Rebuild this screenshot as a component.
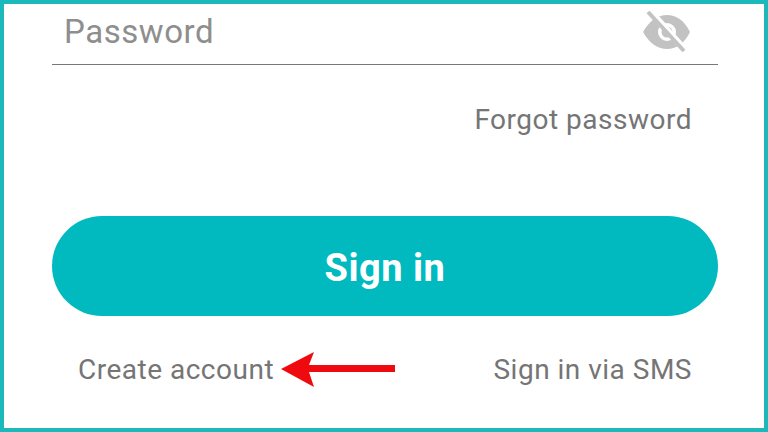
<script>
  let password = '';
</script>

<div class="screen">
  <div class="field">
    <span class="placeholder">Password</span>
    <svg class="eye" width="48" height="42" viewBox="0 0 48 42">
      <path d="M0 21 C7 9 15 4 24 4 C33 4 41 9 47 21 C41 33 33 38 24 38 C15 38 7 33 0 21 Z M24 12 A9 9 0 1 0 24 30 A9 9 0 1 0 24 12 Z" fill="#c2c2c2" fill-rule="evenodd" />
      <circle cx="24" cy="21" r="5.5" fill="#c2c2c2" />
      <path d="M7 0 L43 40" stroke="#fff" stroke-width="6.5" />
      <path d="M5 1 L41 40" stroke="#c2c2c2" stroke-width="4" />
    </svg>
  </div>

  <div class="forgot">Forgot password</div>

  <button class="signin">Sign in</button>

  <div class="links">
    <div class="create">
      <span>Create account</span>
      <svg class="arrow" width="116" height="40" viewBox="0 0 116 40">
        <path d="M1 20 L34 3 L29 16 L115 16 L115 23 L29 23 L34 38 Z" fill="#ee0a0f" />
      </svg>
    </div>
    <span>Sign in via SMS</span>
  </div>
</div>

<style>
  :global(body) {
    margin: 0;
    background: #fff;
  }

  .screen {
    box-sizing: border-box;
    width: 768px;
    height: 432px;
    border: 4px solid #1db9ba;
    padding: 0 46px 0 48px;
    display: flex;
    flex-direction: column;
    font-family: Roboto, sans-serif;
    color: #757575;
    overflow: hidden;
  }

  .field {
    box-sizing: border-box;
    height: 61px;
    border-bottom: 1px solid #777;
    padding: 0 0 0 12px;
    display: flex;
    align-items: center;
    justify-content: space-between;
  }

  .placeholder {
    font-size: 33px;
    letter-spacing: 0.55px;
    color: #8e8e8e;
    padding-bottom: 6px;
  }

  .eye {
    margin-right: 27px;
    margin-bottom: 5px;
  }

  .forgot {
    margin-top: 37px;
    height: 36px;
    line-height: 36px;
    text-align: right;
    padding-right: 26px;
    font-size: 28px;
    letter-spacing: 0.5px;
  }

  .signin {
    margin-top: 78px;
    height: 100px;
    width: 666px;
    border: none;
    border-radius: 50px;
    padding-top: 4px;
    background: #00bac0;
    color: #fff;
    font-family: Roboto, sans-serif;
    font-size: 38px;
    font-weight: 700;
    letter-spacing: 0.5px;
  }

  .links {
    margin-top: 33px;
    height: 40px;
    padding: 0 26px;
    display: flex;
    align-items: center;
    justify-content: space-between;
    font-size: 28px;
    letter-spacing: 0.5px;
  }

  .create {
    display: flex;
    align-items: center;
    gap: 6px;
  }
</style>
